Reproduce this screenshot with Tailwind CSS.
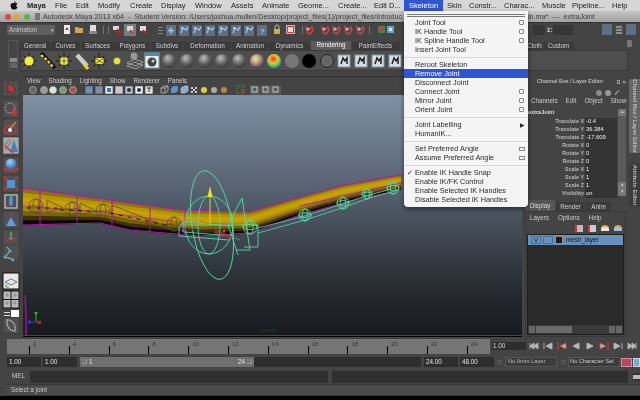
<!DOCTYPE html>
<html lang="en">
<head>
<meta charset="UTF-8">
<title>Maya 2013</title>
<script src="https://cdn.jsdelivr.net/npm/@tailwindcss/browser@4"></script>
</head>
<body class="bg-black">
<div class="relative w-[640px] h-[400px] overflow-hidden bg-[#444444] font-['Liberation_Sans',sans-serif] text-[6.300px] leading-none text-[#d0d0d0] flex flex-col blur-[0.3px]">

  <!-- mac menu bar -->
  <div class="h-[11px] shrink-0 bg-[#d6d6d6] flex items-center text-[#222] text-[7.500px]">
    <span class="w-[27px] pl-[10px]"><svg width="8" height="9" viewBox="0 0 8 9"><path d="M4 2.2C3 1.6 1 1.8.6 3.8.3 5.6 1.6 8.6 2.8 8.6c.6 0 .8-.3 1.3-.3s.7.3 1.3.3c.8 0 1.600-1.400 2-2.400-1.400-.6-1.500-2.700 0-3.400C6.800 1.800 5 1.600 4 2.200zM4 1.800C4 .9 4.700.2 5.500 0c.1 1-.6 1.700-1.500 1.800z" fill="#111"/></svg></span>
    <span class="w-[28px] font-bold">Maya</span><span class="w-[21px]">File</span><span class="w-[22px]">Edit</span><span class="w-[32px]">Modify</span><span class="w-[31px]">Create</span><span class="w-[34px]">Display</span><span class="w-[36px]">Window</span><span class="w-[31px]">Assets</span><span class="w-[36px]">Animate</span><span class="w-[40px]">Geome...</span><span class="w-[36px]">Create...</span><span class="w-[30px]">Edit D...</span>
    <span class="w-[39px] h-full bg-[#2f55d4] text-white flex items-center justify-center">Skeleton</span>
    <span class="w-[26px] pl-[4px]">Skin</span><span class="w-[35px]">Constr...</span><span class="w-[38px]">Charac...</span><span class="w-[30px]">Muscle</span><span class="w-[40px]">Pipeline...</span><span>Help</span>
  </div>

  <!-- window title -->
  <div class="h-[11px] shrink-0 bg-gradient-to-b from-[#c4c4c4] to-[#a2a2a2] flex items-center pl-[5px] text-[#3d3d3d] text-[7.200px] whitespace-nowrap relative">
    <span class="w-[6px] h-[6px] rounded-full bg-[#e0483e] mr-[3px]"></span><span class="w-[6px] h-[6px] rounded-full bg-[#e0a530] mr-[4px]"></span><span class="w-[6px] h-[6px] rounded-full bg-[#5db544] mr-[5px]"></span>
    <span class="w-[5px] h-[7px] bg-[#777] mr-[3px]"></span>
    <span>Autodesk Maya 2013 x64 &nbsp;- &nbsp;Student Version: /Users/joshua.mullen/Desktop/project_files(1)/project_files/Introduc</span>
    <span class="absolute left-[528px]">in.ma* &nbsp;--- &nbsp;extraJoint</span>
  </div>

  <!-- status line -->
  <div class="h-[15px] shrink-0 bg-[#444444] flex items-center relative border-t border-[#333]">
    <div class="ml-[7px] w-[48px] h-[10px] bg-[#5e5e5e] rounded-[1px] flex items-center justify-between pl-[2px] pr-[1px] text-[#ccc]"><span>Animation</span><span class="text-[5px]">▾</span></div>
    <svg id="status-icons" class="absolute left-0 top-0" width="640" height="15" viewBox="0 23 640 15"></svg>
    <div class="absolute left-[533px] top-[2px] w-[12px] h-[10px] bg-[#363636]"></div>
    <span class="absolute left-[547px] top-[4px] font-bold">z:</span>
    <div class="absolute left-[553px] top-[2px] w-[20px] h-[10px] bg-[#363636]"></div>
  </div>

  <!-- shelf -->
  <div class="h-[38px] shrink-0 bg-[#444444] relative">
    <div class="absolute left-[8px] top-[3px] w-[10px] h-[31px] border border-[#555] flex flex-col justify-end items-center pb-[2px] gap-[1px]"><span class="w-[7px] h-[4px] bg-[#8a8a8a]"></span><span class="w-[7px] h-[5px] bg-[#666]"></span></div>
    <div class="absolute left-[20px] top-[4px] flex h-[9px] items-end text-center text-[#cfcfcf]">
      <span class="w-[30px] h-[8px] pt-[1px] bg-[#3a3a3a] mr-[1px]">General</span><span class="w-[29px] h-[8px] pt-[1px] bg-[#3a3a3a] mr-[1px]">Curves</span><span class="w-[33px] h-[8px] pt-[1px] bg-[#3a3a3a] mr-[1px]">Surfaces</span><span class="w-[35px] h-[8px] pt-[1px] bg-[#3a3a3a] mr-[1px]">Polygons</span><span class="w-[32px] h-[8px] pt-[1px] bg-[#3a3a3a] mr-[1px]">Subdivs</span><span class="w-[47px] h-[8px] pt-[1px] bg-[#3a3a3a] mr-[1px]">Deformation</span><span class="w-[36px] h-[8px] pt-[1px] bg-[#3a3a3a] mr-[1px]">Animation</span><span class="w-[41px] h-[8px] pt-[1px] bg-[#3a3a3a] mr-[1px]">Dynamics</span><span class="w-[40px] h-[9px] pt-[1px] bg-[#5c5c5c] text-white">Rendering</span><span class="w-[47px] h-[8px] pt-[1px] bg-[#3a3a3a] mx-[1px]">PaintEffects</span>
    </div>
    <div class="absolute left-[527px] top-[4px] flex h-[9px] items-end text-center"><span class="w-[15px] h-[8px] pt-[1px] bg-[#3a3a3a] mr-[1px]">Cloth</span><span class="w-[31px] h-[8px] pt-[1px] bg-[#3a3a3a]">Custom</span></div>
    <div class="absolute left-[20px] top-[13px] w-[608px] h-[21px] bg-[#4e4e4e] border border-[#3a3a3a]"></div>
    <svg id="shelf-icons" class="absolute left-0 top-0" width="640" height="38" viewBox="0 37 640 38">
      <defs>
        <radialGradient id="ball" cx=".4" cy=".3" r=".8"><stop offset="0" stop-color="#bdbdbd"/><stop offset=".5" stop-color="#666"/><stop offset="1" stop-color="#2b2b2b"/></radialGradient>
        <radialGradient id="beach" cx=".4" cy=".35" r=".75"><stop offset="0" stop-color="#f4e9a0"/><stop offset=".5" stop-color="#b08a70"/><stop offset="1" stop-color="#1d2a6a"/></radialGradient>
        <radialGradient id="heat" cx=".45" cy=".35" r=".7"><stop offset="0" stop-color="#ff2a2a"/><stop offset=".45" stop-color="#e9c82a"/><stop offset=".75" stop-color="#3fbf6a"/><stop offset="1" stop-color="#2a80b0"/></radialGradient>
        <radialGradient id="bluesph" cx=".4" cy=".3" r=".8"><stop offset="0" stop-color="#9fd0f5"/><stop offset="1" stop-color="#1c5aa0"/></radialGradient>
      </defs>
    </svg>
    <div class="absolute left-[627px] top-[3px] w-[5px] h-[7px] bg-[#777] rounded-[1px]"></div>
  </div>

  <!-- workspace -->
  <div class="h-[262px] shrink-0 flex">
    <!-- toolbox -->
    <svg id="toolbox" class="w-[23px] h-[262px] shrink-0" viewBox="0 75 23 262"></svg>

    <!-- model panel -->
    <div class="w-[499px] shrink-0 flex flex-col">
      <div class="h-[9px] mt-[1px] bg-[#444] border-t border-[#333] flex items-center gap-[8px] pl-[4px] text-[#ccc]"><span>View</span><span>Shading</span><span>Lighting</span><span>Show</span><span>Renderer</span><span>Panels</span></div>
      <svg id="panel-icons" class="h-[10px] w-full shrink-0" viewBox="23 85 499 10"></svg>
      <div class="relative flex-1 border-b border-black">
        <svg id="scene" width="499" height="240" viewBox="23 95 499 240" class="block"></svg>
        <span class="absolute left-[239px] top-[232px] text-[6px] text-[#0f4a2a]">persp</span>
      </div>
    </div>

    <!-- channel box -->
    <div class="flex-1 flex min-w-0 pl-[3px]">
      <div class="w-[101px] shrink-0 flex flex-col">
        <div class="h-[12px] mt-[1px] flex items-center pl-[12px] text-[5.200px] font-bold text-[#bbb] whitespace-nowrap"><span>Channel Box / Layer Editor</span><span class="ml-[14px] w-[4px] h-[4px] border border-[#999]"></span><span class="ml-[2px] text-[6px]">×</span></div>
        <div class="h-[9px] flex justify-end items-center gap-[3px] pr-[6px]"><span class="w-[6px] h-[6px] rounded-full bg-[#8a8a8a]"></span><span class="w-[6px] h-[6px] rounded-full bg-[#999]"></span><span class="w-[6px] h-[1px] bg-[#aaa] -rotate-45"></span></div>
        <div class="h-[9px] flex gap-[8px] items-center pl-[6px] text-[#ccc]"><span>Channels</span><span>Edit</span><span>Object</span><span>Show</span></div>
        <div class="relative h-[91px] pt-[4px] bg-[#444]">
          <div class="font-bold text-[5.500px] h-[8px] pl-[3px] text-[#ddd]">extraJoint</div>
          <div id="channels" class="flex flex-col"></div>
          <div class="absolute right-0 top-[3px] w-[8px] h-[87px] bg-[#5a5a5a] flex flex-col justify-between"><span class="h-[7px] bg-[#777] text-center text-[5px]">▴</span><span class="h-[7px] bg-[#777] text-center text-[5px] mt-auto">▴</span><span class="h-[7px] bg-[#777] text-center text-[5px]">▾</span></div>
        </div>
        <div class="h-[3px]"></div>
        <div class="h-[11px] flex items-end text-center"><span class="w-[30px] h-[11px] bg-[#555] pt-[3px] text-[#ddd]">Display</span><span class="w-[29px] h-[9px] bg-[#3b3b3b] ml-[1px] pt-[2px]">Render</span><span class="w-[25px] h-[9px] bg-[#3b3b3b] ml-[1px] pt-[2px]">Anim</span></div>
        <div class="flex-1 border border-[#383838] flex flex-col">
          <div class="h-[10px] flex items-center gap-[9px] pl-[4px] text-[#ccc] pt-[2px]"><span>Layers</span><span>Options</span><span>Help</span></div>
          <div class="h-[12px] flex justify-end items-center gap-[5px] pr-[3px]"><span class="w-[8px] h-[7px] bg-[#bbb] border-l-2 border-[#d33]"></span><span class="w-[8px] h-[7px] bg-[#ccc] border-l-2 border-[#d33]"></span><span class="w-[8px] h-[6px] bg-[#e8e8e8] rounded-t-full border-t-2 border-[#e9a030]"></span><span class="w-[8px] h-[6px] bg-[#9cc4ea] rounded-t-full border-t-2 border-[#e9a030]"></span></div>
          <div class="flex-1 mx-[1px] mb-[1px] bg-[#2a2a2a] border border-[#1d1d1d] relative">
            <div class="h-[10px] bg-[#6691bd] flex items-center gap-[1px] pl-[3px] text-[#111]"><span class="w-[10px] h-[8px] border border-[#4a6f96] text-center text-[6px]">V</span><span class="w-[10px] h-[8px] border border-[#4a6f96] ml-[1px]"></span><span class="w-[8px] h-[8px] bg-[#1a1a1a] border border-white/50 mr-[2px] ml-[1px]"></span><span>mesh_layer</span></div>
            <div class="absolute left-0 right-0 bottom-0 h-[9px] bg-[#3a3a3a] flex items-center gap-[1px] px-[1px]"><span class="w-[6px] h-[7px] bg-[#666]"></span><span class="w-[36px] h-[7px] bg-[#6a6a6a]"></span><span class="w-[6px] h-[7px] bg-[#666] ml-auto"></span><span class="w-[6px] h-[7px] bg-[#666]"></span></div>
          </div>
        </div>
      </div>
      <div class="flex-1 flex flex-col items-end gap-[10px] pt-[4px] text-[6.200px]">
        <div class="w-[11px] h-[74px] bg-[#666] rounded-l-[2px] flex items-center justify-center"><span class="rotate-90 whitespace-nowrap text-[#ddd]">Channel Box / Layer Editor</span></div>
        <div class="w-[11px] h-[44px] bg-[#3c3c3c] rounded-l-[2px] flex items-center justify-center"><span class="rotate-90 whitespace-nowrap text-[#ddd]">Attribute Editor</span></div>
      </div>
    </div>
  </div>

  <!-- time slider -->
  <div class="h-[18px] shrink-0 flex items-center pl-[7px]">
    <div id="ticks" class="relative w-[483px] h-[15px] bg-[#757575]"></div>
    <div class="ml-[2px] w-[34px] h-[8px] bg-[#2e2e2e] flex items-center pl-[1px] text-[#ddd]">1.00</div>
    <svg id="transport" class="ml-[3px]" width="108" height="10" viewBox="0 0 108 10"></svg>
  </div>

  <!-- range slider -->
  <div class="h-[14px] shrink-0 flex items-center pl-[7px] text-[#e4e4e4]">
    <div class="w-[34px] h-[10px] bg-[#2e2e2e] flex items-center pl-[2px]">1.00</div>
    <div class="ml-[2px] w-[34px] h-[10px] bg-[#2e2e2e] flex items-center pl-[2px]">1.00</div>
    <div class="ml-[3px] w-[341px] h-[10px] bg-[#2e2e2e] flex">
      <div class="w-[174px] h-full bg-[#6f6f6f] flex items-center justify-between px-[2px]"><span class="flex items-center gap-[2px]"><span class="w-[5px] h-[5px] border-b border-r border-[#999] bg-[#777]"></span>1</span><span class="flex items-center gap-[2px]">24<span class="w-[5px] h-[5px] border-b border-r border-[#999] bg-[#777]"></span></span></div>
    </div>
    <div class="ml-[3px] w-[34px] h-[10px] bg-[#2e2e2e] flex items-center pl-[2px]">24.00</div>
    <div class="ml-[2px] w-[34px] h-[10px] bg-[#2e2e2e] flex items-center pl-[2px]">48.00</div>
    <span class="ml-[3px] w-[8px] text-[6px] text-[#888]">▽</span>
    <div class="w-[52px] h-[10px] bg-[#3b3b3b] border border-[#555] flex items-center pl-[2px] text-[#bbb] whitespace-nowrap overflow-hidden text-[5.700px]">No Anim Layer</div>
    <span class="ml-[4px] w-[7px] text-[6px] text-[#888]">▽</span>
    <div class="w-[52px] h-[10px] bg-[#3b3b3b] border border-[#555] flex items-center pl-[1px] text-[#ccc] whitespace-nowrap overflow-hidden text-[5.700px]">No Character Set</div>
    <span class="w-[11px] h-[9px] ml-[1px] bg-[#b04a60] border border-[#e08a9a]"></span>
    <span class="w-[7px] h-[9px] ml-[1px] bg-[#7da7d0] border border-[#cfd9e4]"></span>
  </div>

  <!-- command line -->
  <div class="h-[15px] shrink-0 flex items-center pl-[12px] text-[#ccc]">
    <span class="w-[18px]">MEL</span>
    <div class="w-[298px] h-[12px] bg-[#2f2f2f]"></div>
    <div class="ml-[4px] w-[296px] h-[12px] bg-[#2f2f2f]"></div>
    <div class="ml-[5px] w-[7px] h-[8px] bg-[#bbb] border-y-2 border-[#333]"></div>
  </div>

  <!-- help line -->
  <div class="h-[12px] shrink-0 ml-[6px] bg-[#4a4a4a] border-y border-[#373737] flex items-center pl-[5px] text-[#ccc]">Select a joint</div>
  <div class="flex-1 bg-black"></div>

  <!-- skeleton menu, open over the viewport -->
  <div id="skeleton-menu" class="absolute left-[404px] top-[11px] w-[124px] h-[196px] bg-[#f4f4f4] rounded-b-[4px] shadow-[0_2px_5px_rgba(0,0,0,0.5)] text-[#2a2a2a] text-[7.300px] whitespace-nowrap pt-[3px]">
    <div class="mx-[3px] h-[3px] border-y border-[#777]"></div>
    <div id="menu-items" class="pt-[1px]"></div>
  </div>
</div>

<script>
  // skeleton menu rows: label, has option box, kind
  const menuRows = [
    ['Joint Tool', 1], ['IK Handle Tool', 1], ['IK Spline Handle Tool', 1], ['Insert Joint Tool', 0], '-',
    ['Reroot Skeleton', 0], ['Remove Joint', 0, 'hi'], ['Disconnect Joint', 0], ['Connect Joint', 1], ['Mirror Joint', 1], ['Orient Joint', 1], '-',
    ['Joint Labelling', 0, 'sub'], ['HumanIK...', 0], '-',
    ['Set Preferred Angle', 2], ['Assume Preferred Angle', 2], '-',
    ['Enable IK Handle Snap', 0, 'check'], ['Enable IK/FK Control', 0], ['Enable Selected IK Handles', 0], ['Disable Selected IK Handles', 0]
  ];
  document.getElementById('menu-items').innerHTML = menuRows.map(r => {
    if (r === '-') return '<div class="h-[6px] flex items-center"><div class="w-full h-px bg-[#d8d8d8]"></div></div>';
    const hi = r[2] === 'hi';
    let right = '';
    if (r[1] === 1) right = '<span class="absolute right-[4px] top-[2px] w-[5px] h-[5px] border border-[#888] rounded-[1px]"></span>';
    if (r[1] === 2) right = '<span class="absolute right-[3px] top-[3px] w-[6px] h-[4px] border border-[#888]"></span>';
    if (r[2] === 'sub') right = '<span class="absolute right-[3px] top-[1px] text-[6px]">▶</span>';
    const check = r[2] === 'check' ? '<span class="absolute left-[3px] top-0">✓</span>' : '';
    return `<div class="relative h-[9px] leading-[9px] pl-[11px] ${hi ? 'bg-[#2f55d4] text-white' : ''}">${check}${r[0]}${right}</div>`;
  }).join('');

  // channel box rows
  const channels = [['Translate X','-0.4'],['Translate Y','36.384'],['Translate Z','-17.609'],['Rotate X','0'],['Rotate Y','0'],['Rotate Z','0'],['Scale X','1'],['Scale Y','1'],['Scale Z','1'],['Visibility','on']];
  document.getElementById('channels').innerHTML = channels.map(c =>
    `<div class="h-[8px] flex items-center"><span class="w-[60px] text-right font-bold text-[5.400px] text-[#b8b8b8] pr-[1px] whitespace-nowrap">${c[0]}</span><span class="w-[32px] h-[8px] bg-[#333] text-[#eee] text-[5.800px] pl-[1px] pt-[1px]">${c[1]}</span></div>`
  ).join('');

  // time slider ticks
  let ticksHtml = '';
  for (let i = 0; i < 12; i++) {
    const x = 22 + i * 39.8;
    ticksHtml += `<span class="absolute top-[7px] w-[1px] h-[8px] bg-black" style="left:${x}px"></span><span class="absolute top-[2px] text-[6px] text-[#333]" style="left:${x + 4}px">${(i + 1) * 2}</span>`;
  }
  document.getElementById('ticks').innerHTML = ticksHtml;

  // playback controls
  let tp = '';
  [[0,'M1 2v6M9 2L5 5l4 3zM5 2L1 5l4 3z'],[14,'M1 2v6M9 2v6L3 5z'],[28,'M1 1v8M9 2v6L3 5z'],[42,'M8 2v6L2 5z'],[56,'M2 2v6l6-3z'],[70,'M9 1v8M1 2v6l6-3z'],[84,'M9 2v6M1 2v6l6-3z'],[98,'M9 2v6M1 2v6l4-3zM5 2v6l4-3z']].forEach(b => {
    const red = b[0] === 28 || b[0] === 70;
    tp += `<g transform="translate(${b[0]},0)"><path d="${b[1]}" fill="#b8b8b8" stroke="${red ? '#d04040' : '#b8b8b8'}" stroke-width=".9"/></g>`;
  });
  document.getElementById('transport').innerHTML = tp;

  // status line icons
  let st = '';
  const tile = (x, y, w, h, f) => `<rect x="${x}" y="${y}" width="${w}" height="${h}" fill="${f}"/>`;
  st += tile(64,25,6,9,'#eee') + '<path d="M65 30l2-3 2 3z" fill="#c33"/>';
  st += '<path d="M75 27h3l1 1h4v5h-8z" fill="#c9a850"/>';
  st += tile(90,25,6,6,'#ddd') + tile(89,31,8,3,'#888');
  st += '<rect x="103" y="26" width="1" height="8" fill="#777"/><rect x="108" y="26" width="1" height="8" fill="#777"/>';
  st += tile(113,26,6,4,'#ddd') + '<path d="M117 29l4 4M116 31l3 3" stroke="#c22" stroke-width="1.500"/>';
  st += tile(124,24,12,12,'#6e7f85') + tile(127,26,6,5,'#d8d8d8') + '<path d="M130 30l3 3" stroke="#c22" stroke-width="1.500"/>';
  st += tile(140,26,6,5,'#ddd') + '<path d="M143 30l3 4" stroke="#c22" stroke-width="1.500"/>';
  st += tile(158,27,5,1,'#888') + tile(158,30,5,1,'#888') + tile(158,33,5,1,'#888');
  [171,184,197,210,223,236,249,262].forEach((x, i) => {
    st += tile(x - 5, 25, 10, 11, '#5f6f80');
    if (i === 7) st += `<text x="${x - 2}" y="34" font-size="8" fill="#9fc4e8" font-weight="bold">?</text>`;
    else if (i === 0) st += `<path d="M${x-3} 30.500h6M${x} 27.500v6" stroke="#8fc6f5" stroke-width="1.600"/>`;
    else st += `<path d="M${x-3} 33l2-5 3 2 2-3" fill="none" stroke="#8fc6f5" stroke-width="1.400"/><circle cx="${x-2}" cy="28" r="1" fill="#c8e2f8"/>`;
  });
  st += '<rect x="274" y="29" width="6" height="5" fill="#d9a93a"/><path d="M275 29v-2a2 2 0 014 0v2" fill="none" stroke="#bbb"/>';
  st += tile(286,25,9,9,'#bbb') + tile(287,26,7,7,'#d33') + tile(288,27,5,5,'#ddd');
  st += '<rect x="302" y="26" width="1" height="8" fill="#777"/>';
  [309,325,336,348,360].forEach(x => {
    st += `<path d="M${x-3} 27l3 3 3-3 1 3-3 4-3-1z" fill="none" stroke="#c44" stroke-width="1.500"/><circle cx="${x-1}" cy="29" r="1.500" fill="#bbb"/>`;
  });
  st += '<rect x="369" y="26" width="1" height="8" fill="#777"/>';
  st += tile(378,26,7,7,'#3a8a4a') + tile(380,28,3,3,'#d33') + tile(387,26,7,7,'#5fa8c9') + tile(389,28,3,3,'#ddd');
  st += tile(602,24,10,11,'#5f6f80') + tile(615,25,8,9,'#4c4c4c') + '<path d="M616 27h6M616 30h6M616 33h6" stroke="#ccc"/>' + tile(626,24,10,11,'#5f6f80');
  document.getElementById('status-icons').innerHTML = st;

  // shelf icons
  const shelf = document.getElementById('shelf-icons');
  let sh = '';
  const sun = (x, y, r) => {
    let s = '';
    for (let a = 0; a < 8; a++) {
      const t = a * Math.PI / 4;
      s += `<line x1="${x}" y1="${y}" x2="${x + Math.cos(t) * 8}" y2="${y + Math.sin(t) * 8}" stroke="#111" stroke-width=".8"/>`;
    }
    return s + `<circle cx="${x}" cy="${y}" r="${r}" fill="#f2ec3c"/>`;
  };
  sh += sun(29,61,4.500);
  sh += '<path d="M41 53l14 15" stroke="#111" stroke-width="4"/><path d="M41 55l6 5 6 7" stroke="#e8d830" stroke-width="2.200" stroke-dasharray="3 1.500" fill="none"/>';
  sh += sun(64,61,4) + '<path d="M60 61h8M64 57v8" stroke="#333" stroke-width=".6"/>';
  sh += '<path d="M77 55l10 11" stroke="#ccc" stroke-width="4.500"/><path d="M84 64l4 5" stroke="#e8d830" stroke-width="3"/>';
  sh += sun(99,61,0) + '<rect x="95" y="57.500" width="9" height="7" fill="#f0de38" stroke="#222" stroke-width=".7"/><path d="M95 58l9 6M104 58l-9 6" stroke="#222" stroke-width=".6"/>';
  sh += '<circle cx="117" cy="61" r="3.500" fill="#e9e436" stroke="#666" stroke-dasharray="1 1"/>';
  sh += '<path d="M127 66l7-4 9 3-7 4zM127 63l7-4 9 3-7 4z" fill="none" stroke="#bbb" stroke-width=".7"/><circle cx="134" cy="56" r="3.500" fill="#999"/>';
  sh += '<rect x="145" y="53" width="14" height="15" fill="#e8eef4" stroke="#7aa"/><rect x="145" y="53" width="14" height="3" fill="#3f8fd0"/><circle cx="152" cy="62" r="4.500" fill="#444"/><circle cx="153" cy="61" r="1.500" fill="#ccc"/>';
  [169,187,205,222,239].forEach(x => { sh += `<circle cx="${x}" cy="61" r="7" fill="url(#ball)"/>`; });
  sh += '<circle cx="257" cy="61" r="7" fill="url(#beach)"/><circle cx="274" cy="61" r="7" fill="url(#heat)"/><circle cx="292" cy="61" r="7" fill="#777"/><circle cx="309" cy="61" r="7" fill="#000"/><circle cx="327" cy="61" r="6.500" fill="#666" stroke="#222"/>';
  [344,361,378,395].forEach(x => { sh += `<rect x="${x-6}" y="55" width="12" height="12" fill="#ddd" stroke="#7b9bb5"/><path d="M${x-3} 64l2-6 2 3 2-3v6" fill="none" stroke="#222" stroke-width="1.500"/>`; });
  shelf.insertAdjacentHTML('beforeend', sh);

  // left toolbox
  let tb = '';
  const tool = (y, h, active) => `<rect x="3" y="${y}" width="16" height="${h}" fill="${active ? '#a8a8a8' : '#505050'}" stroke="#3a3a3a" stroke-width=".5"/>`;
  tb += tool(81,15) + '<path d="M8 83l8 6-3 1 2 4-2 1-2-4-3 2z" fill="#c8343a" stroke="#222" stroke-width=".5"/>';
  tb += tool(100,17) + '<circle cx="10" cy="108" r="5" fill="none" stroke="#aaa" stroke-dasharray="2 1"/><path d="M12 108l6 4-2 1 1 3-2 1-1-3-2 1z" fill="#c8343a"/>';
  tb += tool(119,17) + '<ellipse cx="10" cy="130" rx="6" ry="4" fill="none" stroke="#c33" stroke-width="1.500"/><path d="M9 130l7-8" stroke="#b9843a" stroke-width="1.800"/><circle cx="10" cy="130" r="2" fill="#eee"/>';
  tb += tool(137,17,1) + '<path d="M14 140l4 12H10z" fill="#3a82c8"/><path d="M5 150l7-9M4 146l6-7" stroke="#888" stroke-width="1.500"/><path d="M5 146l8 7" stroke="#c33" stroke-width="1.500"/>';
  tb += tool(157,17) + '<circle cx="11" cy="164" r="5.500" fill="url(#bluesph)"/><path d="M4 168a8 5 0 0014 0" fill="none" stroke="#c33" stroke-width="2"/>';
  tb += tool(175,17) + '<path d="M4 177l14 13M18 177L4 190" stroke="#c33" stroke-width="2"/><rect x="7" y="180" width="8" height="8" fill="#4d93d6"/>';
  tb += tool(193,17) + '<rect x="5" y="195" width="12" height="13" fill="none" stroke="#ddd"/><ellipse cx="11" cy="201" rx="2" ry="5" fill="#4d93d6"/><path d="M11 194v4" stroke="#3c3"/><path d="M6 206l3-2" stroke="#c33"/>';
  tb += tool(211,17) + '<path d="M11 213v3" stroke="#c33" stroke-width="1.500"/><path d="M6 226l5-9 5 9z" fill="#5ba0dc"/>';
  tb += tool(230,15) + '<path d="M11 232v4" stroke="#3c3" stroke-width="1.500"/><path d="M11 237l-4 4M11 237l5 4" stroke="#c33" stroke-width="1.500"/><circle cx="11" cy="238" r="1.500" fill="#888"/>';
  tb += tool(245,15) + '<path d="M5 257l5-6M10 251l-3-4M5 257l7 2" stroke="#9cc" /><circle cx="5" cy="257" r="1.500" fill="#5da5dd"/><circle cx="10" cy="251" r="1.500" fill="#5da5dd"/><circle cx="13" cy="260" r="1.500" fill="#5da5dd"/>';
  tb += '<rect x="3" y="273" width="16" height="16" fill="#e8e8e8" stroke="#111"/><path d="M5 282l6-3 6 3-6 3z" fill="none" stroke="#777"/><path d="M6 284v3M6 287h3" stroke="#3a3"/>';
  tb += '<rect x="3" y="291" width="16" height="17" fill="#bbb" stroke="#111"/><path d="M11 291v17M3 299.500h16" stroke="#111"/><path d="M5 295h4M7 293v4M13 295h4M15 293v4M5 303h4M7 301v4M13 303h4M15 301v4" stroke="#888"/>';
  tb += '<rect x="4" y="312" width="6" height="1" fill="#ddd"/><rect x="4" y="315" width="6" height="1" fill="#ddd"/><rect x="11" y="310" width="8" height="7" fill="#fff"/>';
  tb += tool(318,15) + '<path d="M7 320c6 0 9 5 8 11-5 0-9-5-8-11z" fill="none" stroke="#bbb" stroke-width="1.500" stroke-dasharray="1.500 .7"/>';
  document.getElementById('toolbox').innerHTML = '<rect x="0" y="75" width="23" height="262" fill="#444"/>' + tb;

  // model panel toolbar
  let pi = '';
  [[33,'#666'],[44,'#999'],[53,'#dde8dd'],[63,'#7a9a70'],[73,'#a55']].forEach(i => {
    pi += `<circle cx="${i[0]}" cy="90" r="3.500" fill="${i[1]}" stroke="#bbb" stroke-width=".6"/>`;
  });
  [[89,'#6d8fb0'],[99,'#7f8f9f'],[109,'#e4eef8'],[119,'#c8c8c8'],[129,'#b5c0c8'],[139,'#e8f0f8'],[149,'#e0e0e0']].forEach((i, n) => {
    pi += `<rect x="${i[0] - 4}" y="86" width="8" height="8" fill="${i[1]}" stroke="#2c2c2c" stroke-width=".5"/>`;
    if (n === 2) pi += `<rect x="${i[0] - 2}" y="88" width="4" height="4" fill="#2f78c4"/>`;
    if (n === 4 || n === 5) pi += `<circle cx="${i[0]}" cy="90" r="2" fill="#333"/>`;
    if (n === 6) pi += `<path d="M${i[0] - 2} 88h4M${i[0]} 88v4" stroke="#333"/>`;
  });
  pi += '<path d="M161 88l3-2h4v5l-3 2h-4zM161 88h4v5M165 88l3-2" fill="none" stroke="#ccc" stroke-width=".7"/>';
  pi += '<path d="M171 88l3-2h4v5l-3 2h-4z" fill="#5b93cf"/>';
  pi += '<path d="M181 88l3-2h4v5l-3 2h-4z" fill="#7fb0d8" stroke="#ddd" stroke-width=".5"/>';
  pi += '<path d="M191 87h2v2h-2zM195 87h2v2h-2zM193 89h2v2h-2zM191 91h2v2h-2zM195 91h2v2h-2z" fill="#ccc"/>';
  pi += '<circle cx="204" cy="90" r="3" fill="#e0d030"/><circle cx="214" cy="90" r="3" fill="#aaa"/><circle cx="224" cy="90" r="3" fill="#b9863a"/>';
  pi += '<rect x="237" y="86" width="7" height="7" fill="none" stroke="#3a9a3a" stroke-dasharray="1.500 1"/><path d="M241 89l4 4" stroke="#c33" stroke-width="1.500"/>';
  [255,266,276].forEach(x => { pi += `<rect x="${x - 5}" y="85.500" width="10" height="9" fill="#5c5c5c"/><rect x="${x - 3}" y="87" width="5" height="5" fill="none" stroke="#ddd" stroke-width=".8"/>`; });
  document.getElementById('panel-icons').innerHTML = '<rect x="23" y="85" width="499" height="10" fill="#444"/>' + pi;

  // viewport: tube and rig
  const topEdge = [[23,188],[110,200],[180,210],[250,212],[290,200],[340,186],[405,174]];
  const botEdge = [[23,225],[100,223],[130,230],[200,236],[250,233],[300,215],[350,201],[405,189]];
  const edgeAt = (edge, x) => {
    for (let i = 0; i < edge.length - 1; i++) {
      const a = edge[i], b = edge[i + 1];
      if (x >= a[0] && x <= b[0]) return a[1] + (b[1] - a[1]) * (x - a[0]) / (b[0] - a[0]);
    }
    return edge[edge.length - 1][1];
  };
  const bandColors = ['#8c7210','#b59500','#c7a200','#c39e00','#a88800','#7a6200','#3d3100','#0a0800'];
  let scene = '<defs><linearGradient id="sky" x1="0" y1="0" x2="0" y2="1"><stop offset="0" stop-color="#7f90a5"/><stop offset=".4" stop-color="#566170"/><stop offset=".75" stop-color="#2d3239"/><stop offset="1" stop-color="#17191d"/></linearGradient></defs>';
  scene += '<rect x="23" y="95" width="499" height="240" fill="url(#sky)"/>';
  bandColors.forEach((c, b) => {
    const pts = [], back = [];
    for (let x = 23; x <= 405; x += 6) {
      const t = edgeAt(topEdge, x), m = edgeAt(botEdge, x);
      pts.push(`${x},${t + (m - t) * b / 8}`);
      back.unshift(`${x},${t + (m - t) * (b + 1) / 8 + .5}`);
    }
    scene += `<polygon points="${pts.concat(back).join(' ')}" fill="${c}"/>`;
  });
  // magenta cage
  const mag = 'fill="none" stroke="#b414b4" stroke-width="1"';
  const line = e => e.map(p => p.join(',')).join(' ');
  scene += `<polyline points="${line(topEdge)}" ${mag}/><polyline points="${line(botEdge)}" ${mag}/>`;
  scene += `<polyline points="23,206 100,212 180,222 250,226" ${mag} stroke-opacity=".7"/><polyline points="300,206 405,182" ${mag}/>`;
  [40,77,112,150,185].forEach(x => { scene += `<line x1="${x}" y1="${edgeAt(topEdge,x)}" x2="${x}" y2="${edgeAt(botEdge,x)}" stroke="#b414b4"/>`; });
  // dark bones on the left
  const dark = 'fill="none" stroke="#5b4a2a" stroke-width=".8"';
  [[36,206],[72,209],[103,211],[174,224]].forEach(c => {
    scene += `<circle cx="${c[0]}" cy="${c[1]}" r="7" ${dark}/><ellipse cx="${c[0]}" cy="${c[1]}" rx="3" ry="7" ${dark}/><line x1="${c[0]-7}" y1="${c[1]}" x2="${c[0]+7}" y2="${c[1]}" ${dark}/>`;
  });
  scene += `<path d="M47 200v12l16-4zM80 203v12l16-4zM112 205v11l60 13z" ${dark}/>`;
  scene += '<path d="M27 208l30 0M60 210l30 1M110 213l60 13" stroke="#12124a" stroke-dasharray="4 5"/>';
  // green controls
  const g = 'fill="none" stroke="#4fdc9e" stroke-width=".9"';
  scene += `<ellipse cx="212" cy="225" rx="20" ry="55" transform="rotate(-9 212 225)" ${g}/>`;
  scene += `<ellipse cx="209" cy="225" rx="24" ry="29" ${g}/><ellipse cx="209" cy="225" rx="11" ry="29" ${g}/>`;
  scene += `<path d="M242 198l-14 27 10 30M242 198l8 52-14 0M228 225h30v22h-14" ${g}/><path d="M183 222l50 4v10l-50-4zM183 222l-4 6v8l50 4" ${g}/>`;
  scene += `<path d="M185 225h45M192 218l5 10M215 230l25 10" stroke="#4fdc9e" stroke-width=".5" fill="none"/>`;
  [[250,227,7],[305,215,6],[343,203,6],[367,194,5],[393,188,6]].forEach(c => {
    scene += `<circle cx="${c[0]}" cy="${c[1]}" r="${c[2]}" ${g}/><ellipse cx="${c[0]}" cy="${c[1]}" rx="${c[2]/2.200}" ry="${c[2]}" ${g}/><ellipse cx="${c[0]}" cy="${c[1]}" rx="${c[2]}" ry="${c[2]/2.500}" ${g}/>`;
  });
  scene += `<path d="M258 228l47-12 40-13 24-8 26-7M258 233l47-13 40-13 24-9 30-8" stroke="#4fdc9e" stroke-width=".8" fill="none"/>`;
  // move manipulator
  scene += '<path d="M210 197v28" stroke="#dcd040"/><path d="M210 186l-2.500 11h5z" fill="#f0e020"/>';
  scene += '<path d="M180 228l34 4" stroke="#2222bb" stroke-width="1.300" stroke-dasharray="3 2"/><path d="M214 232l18 5" stroke="#d32020" stroke-width="1.300"/><circle cx="224" cy="231" r="1.500" fill="#e33"/>';
  // origin axes
  scene += '<path d="M36 322v-9" stroke="#20c020"/><path d="M34 312h4l-2 3z" fill="#20c020"/><path d="M36 322h-6" stroke="#2040d0"/><rect x="28" y="320.500" width="3" height="3" fill="#2040d0"/><path d="M36 322h4" stroke="#d02020"/><rect x="38" y="321" width="3" height="3" fill="#d02020"/>';
  scene += `<path d="M25 295l1 20 0 20" stroke="#a010a0" stroke-width="1.500" fill="none"/>`;
  document.getElementById('scene').innerHTML = scene;
</script>
</body>
</html>
